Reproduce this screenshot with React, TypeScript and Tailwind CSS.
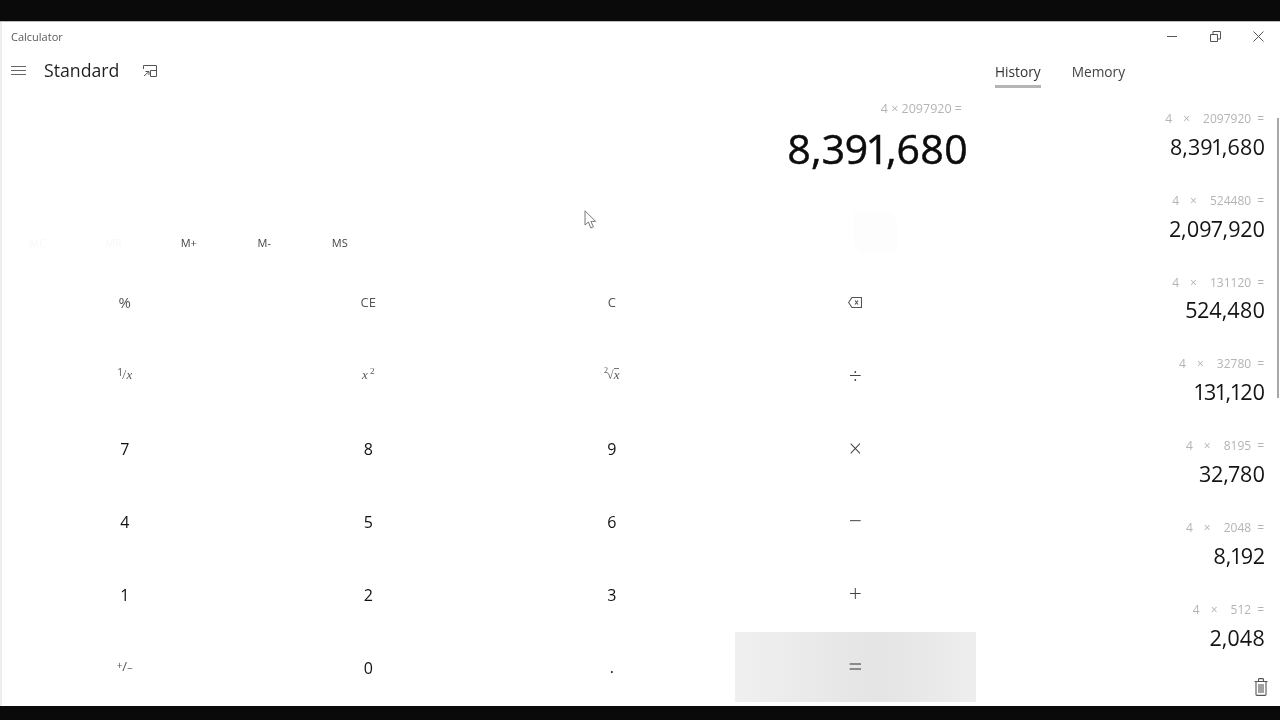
const FONT = "font-['Open_Sans','Noto_Sans',sans-serif]";

const history = [
  { a: "4", b: "2097920", r: "8,391,680" },
  { a: "4", b: "524480", r: "2,097,920" },
  { a: "4", b: "131120", r: "524,480" },
  { a: "4", b: "32780", r: "131,120" },
  { a: "4", b: "8195", r: "32,780" },
  { a: "4", b: "2048", r: "8,192" },
  { a: "4", b: "512", r: "2,048" },
];

function Serif({ children }: { children: React.ReactNode }) {
  return <span className="font-['Liberation_Serif',serif] italic">{children}</span>;
}

function Key({ children, className = "" }: { children: React.ReactNode; className?: string }) {
  return (
    <button className={`flex items-center justify-center ${className}`}>{children}</button>
  );
}

function Backspace() {
  return (
    <svg width="14" height="11" viewBox="0 0 14 11" fill="none" stroke="#555" strokeWidth="1.1">
      <path d="M4 .5H13.5V10.5H4L.6 5.5Z" />
      <path d="M7 3.5L10 7.5M10 3.5L7 7.5" />
    </svg>
  );
}

const fn = "text-[#555] text-[13px]";
const op = "text-[#444] text-[23px] font-light";
const num = "text-[#111] text-[16px]";

function Keypad() {
  return (
    <div className="grid grid-cols-4 grid-rows-[repeat(6,73px)] pl-[3px] pb-[2px]">
      <Key className="text-[#555] text-[15px]">%</Key>
      <Key className={fn}>CE</Key>
      <Key className={fn}>C</Key>
      <Key><Backspace /></Key>

      <Key className="text-[#555] text-[13px] pb-[2px]">
        <span className="text-[10px] -mr-px mb-[4px]">1</span>
        <span className="text-[13px] font-light">/</span>
        <Serif>x</Serif>
      </Key>
      <Key className="text-[#555] text-[13px] pb-[2px]">
        <Serif>x</Serif>
        <span className="text-[9px] ml-[2px] mb-[6px] font-['Liberation_Serif',serif]">2</span>
      </Key>
      <Key className="text-[#555] text-[13px] pb-[2px] font-['Liberation_Serif',serif]">
        <span className="text-[8px] mb-[7px] -mr-[1px]">2</span>
        <span className="text-[12px]">√</span>
        <span className="italic border-t border-[#777] leading-[12px]">x</span>
      </Key>
      <Key className={op}>÷</Key>

      <Key className={num}>7</Key>
      <Key className={num}>8</Key>
      <Key className={num}>9</Key>
      <Key className={op}>×</Key>

      <Key className={num}>4</Key>
      <Key className={num}>5</Key>
      <Key className={num}>6</Key>
      <Key className={`${op} pb-[3px]`}>−</Key>

      <Key className={num}>1</Key>
      <Key className={num}>2</Key>
      <Key className={num}>3</Key>
      <Key className={`${op} pb-[2px]`}>+</Key>

      <Key className="text-[#555] text-[13px] pb-[2px]">
        <span className="text-[10px] mb-[2px]">+</span>/<span className="text-[10px] mt-[3px]">−</span>
      </Key>
      <Key className={num}>0</Key>
      <Key className={`${num} pb-[2px]`}>.</Key>
      <Key className="mx-px mt-px mb-[2px] bg-gradient-to-r from-[#f0f0f0] via-[#e4e4e4] via-60% to-[#eeeeee] text-[24px] font-semibold text-[#8a8a8a] pb-[3px]">=</Key>
    </div>
  );
}

export default function App() {
  return (
    <div className={`flex h-[720px] w-[1280px] flex-col overflow-hidden bg-[#0a0a0a] blur-[0.35px] ${FONT}`}>
      <div className="h-[21px] shrink-0" />
      <div className="relative flex h-[685px] flex-col border-t border-[#bdbdbd] bg-white">
        {/* title bar */}
        <div className="flex h-[31px] shrink-0 items-center justify-between border-l-2 border-[#eeeeee] pl-[9px] pb-[1px]">
          <span className="text-[11px] text-[#5a5a5a]">Calculator</span>
          <div className="flex items-center pb-[2px]">
            <button className="flex h-[30px] w-[43px] items-center justify-center pr-[1px]">
              <svg width="10" height="10" viewBox="0 0 10 10" stroke="#555"><path d="M0 5.5H10" /></svg>
            </button>
            <button className="flex h-[30px] w-[43px] items-center justify-center">
              <svg width="11" height="11" viewBox="0 0 11 11" fill="none" stroke="#555">
                <path d="M.5 3.5H7.5V10.5H.5Z" />
                <path d="M3 3V.5H10.5V8H8" />
              </svg>
            </button>
            <button className="flex h-[30px] w-[43px] items-center justify-center">
              <svg width="11" height="11" viewBox="0 0 11 11" fill="none" stroke="#555"><path d="M.5 .5L10.5 10.5M10.5 .5L.5 10.5" /></svg>
            </button>
          </div>
        </div>

        <div className="flex min-h-0 flex-1">
          {/* calculator */}
          <div className="relative flex w-[977px] shrink-0 flex-col border-l-2 border-[#eeeeee]">
            <div className="flex h-[35px] shrink-0 items-center">
              <svg className="ml-[9px]" width="15" height="11" viewBox="0 0 15 11" stroke="#666">
                <path d="M0 1.5H15M0 5.5H15M0 9.5H15" />
              </svg>
              <span className="ml-[18px] text-[17.7px] font-medium text-[#1f1f1f]">Standard</span>
              <svg className="ml-[24px]" width="14" height="12" viewBox="0 0 14 12" fill="none" stroke="#555">
                <path d="M.5 .5H13.5V11.5H7.5V5.5H13.5M.5 .5V4" />
                <path d="M1 11L6 6.5M2.5 6.5H6V10" />
              </svg>
            </div>
            <div className="flex h-[40px] shrink-0 items-center justify-end pr-[15px] pt-[2px] text-[12.5px] text-[#b4b4b4]">
              4 × 2097920 =
            </div>
            <div className="flex h-[42px] shrink-0 items-center justify-end pr-[9px] text-[41px] font-medium [-webkit-text-stroke:0.5px_#0c0c0c] proportional-nums text-[#0c0c0c]">
              8,391,680
            </div>
            <div className="flex-1" />
            <div className="mb-[3px] flex h-[40px] shrink-0 -ml-[2px] items-center text-[11px] font-medium">
              <span className="w-[75.5px] text-center text-[#f8f8f8]">MC</span>
              <span className="w-[75.5px] text-center text-[#f8f8f8]">MR</span>
              <span className="w-[75.5px] text-center text-[#444]">M+</span>
              <span className="w-[75.5px] text-center text-[#444]">M-</span>
              <span className="w-[75.5px] text-center text-[#444]">MS</span>
            </div>
            <div className="-ml-[2px]">
              <Keypad />
            </div>

            {/* mouse pointer */}
            <svg className="absolute left-[582px] top-[157px]" width="13" height="19" viewBox="0 0 13 19" fill="#fff" stroke="#777">
              <path d="M1 .8V15L4.4 12L6.8 18L9.4 16.8L6.9 11.4H11.6Z" />
            </svg>
            {/* faint ghost left by the video */}
            <div className="absolute left-[851px] top-[158px] h-[42px] w-[44px] rounded-tr-[14px] rounded-bl-[14px] bg-[#fdfdfd]" />
          </div>

          {/* history pane */}
          <div className="relative flex min-w-0 flex-1 flex-col">
            <div className="flex h-[36px] shrink-0 items-start gap-[31px] pl-[18px] pt-[9px] text-[13.7px] font-medium text-[#444]">
              <span className="border-b-[3px] border-[#b5b5b5] pb-[3px] leading-[20px] text-[#333]">History</span>
              <span className="leading-[20px]">Memory</span>
            </div>
            <div className="pt-[16px]">
              {history.map((h) => (
                <div key={h.r} className="h-[81.8px] pr-[15px]">
                  <div className="flex h-[28px] items-center justify-end pr-px text-[12px] text-[#b4b4b4]">
                    <span>{h.a}</span>
                    <span className="ml-[11px]">×</span>
                    <span className="ml-[13px]">{h.b}</span>
                    <span className="ml-[6px]">=</span>
                  </div>
                  <div className="flex h-[28px] items-center justify-end text-[21.6px] font-medium proportional-nums text-[#141414]">{h.r}</div>
                </div>
              ))}
            </div>
            <div className="flex justify-end pr-[12px]">
              <svg width="14" height="18" viewBox="0 0 14 18" fill="none" stroke="#555" strokeWidth="1.1">
                <path d="M.5 3.5H13.5M2 3.5V16.5C2 17 2.4 17.4 3 17.4H11C11.6 17.4 12 17 12 16.5V3.5M4.5 3.5V1.5C4.5 1 4.9 .6 5.5 .6H8.5C9.1 .6 9.5 1 9.5 1.5V3.5" />
                <path d="M5 6V15M7 6V15M9 6V15" />
              </svg>
            </div>
            {/* scrollbar */}
            <div className="absolute right-[1px] top-[65px] h-[280px] w-[2px] bg-[#a8a8a8]" />
          </div>
        </div>
      </div>
      <div className="flex-1" />
    </div>
  );
}
